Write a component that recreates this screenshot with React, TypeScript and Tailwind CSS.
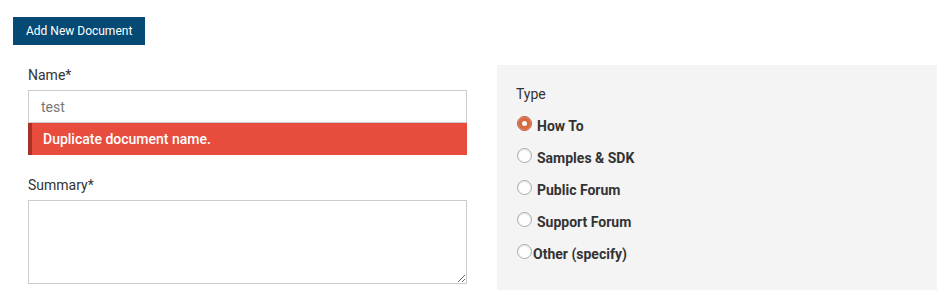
import React, { useState } from 'react';

const types = ['How To', 'Samples & SDK', 'Public Forum', 'Support Forum', 'Other (specify)'];

const App: React.FC = () => {
  const [selected, setSelected] = useState('How To');

  return (
    <div className="min-h-screen bg-white font-['Roboto',sans-serif] text-[#333]">
      {/* Top action */}
      <div className="pl-[13px] pt-[17px]">
        <button className="h-[28px] bg-[#054a74] px-[13px] text-[12px] text-white">
          Add New Document
        </button>
      </div>

      <div className="mt-[20px] flex">
        {/* Left column */}
        <div className="ml-[28px] w-[439px]">
          <label className="block text-[14px] leading-[20px]">Name*</label>
          <input
            type="text"
            defaultValue="test"
            className="mt-[5px] block h-[33px] w-full border border-[#ccc] px-[12px] text-[14px] text-[#777] outline-none"
          />
          <div className="flex h-[32px] items-center border-l-[4px] border-[#a8322a] bg-[#e74c3c] pl-[11px] text-[14px] font-medium text-white">
            Duplicate document name.
          </div>

          <label className="mt-[20px] block text-[14px] leading-[20px]">Summary*</label>
          <textarea className="mt-[5px] block h-[84px] w-full border border-[#ccc] px-[12px] text-[14px] outline-none" />
        </div>

        {/* Right column */}
        <div className="ml-[30px] w-[440px] bg-[#f4f4f4] pl-[19px] pt-[19px] pb-[20px]">
          <div className="text-[14px] leading-[20px]">Type</div>
          <div className="mt-[6px]">
            {types.map((t) => (
              <label key={t} className="flex h-[32px] items-center text-[14px] font-bold text-[#333]">
                <input
                  type="radio"
                  name="type"
                  checked={selected === t}
                  onChange={() => setSelected(t)}
                  className="m-0 mb-[6px] ml-[1px] h-[15px] w-[15px] shrink-0 appearance-none rounded-full border border-[#a9a9a9] bg-white shadow-[inset_0_1px_2px_rgba(0,0,0,0.12)] checked:border-[#b24e2b] checked:shadow-[inset_0_0_0_4px_#dc6a40]"
                />
                <span className={t === 'Other (specify)' ? 'ml-[1px]' : 'ml-[5px]'}>{t}</span>
              </label>
            ))}
          </div>
        </div>
      </div>
    </div>
  );
};

export default App;
